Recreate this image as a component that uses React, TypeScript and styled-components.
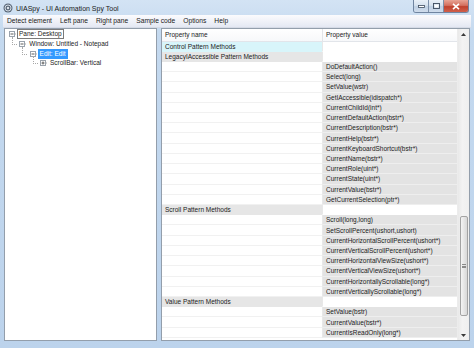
import React from 'react';
import styled, { createGlobalStyle } from 'styled-components';

const GlobalStyle = createGlobalStyle`
  html, body {
    margin: 0;
    padding: 0;
  }
  body {
    width: 474px;
    height: 348px;
    overflow: hidden;
    font-family: 'Liberation Sans', Arial, sans-serif;
    font-size: 6.5px;
    color: #1b1b1b;
  }
`;

type GridRow = { name?: string; value?: string; tone?: 'selected' | 'group' };

const ROWS: GridRow[] = [
  { name: 'Control Pattern Methods', tone: 'selected' },
  { name: 'LegacyIAccessible Pattern Methods', tone: 'group' },
  { value: 'DoDefaultAction()' },
  { value: 'Select(long)' },
  { value: 'SetValue(wstr)' },
  { value: 'GetIAccessible(idispatch*)' },
  { value: 'CurrentChildId(int*)' },
  { value: 'CurrentDefaultAction(bstr*)' },
  { value: 'CurrentDescription(bstr*)' },
  { value: 'CurrentHelp(bstr*)' },
  { value: 'CurrentKeyboardShortcut(bstr*)' },
  { value: 'CurrentName(bstr*)' },
  { value: 'CurrentRole(uint*)' },
  { value: 'CurrentState(uint*)' },
  { value: 'CurrentValue(bstr*)' },
  { value: 'GetCurrentSelection(ptr*)' },
  { name: 'Scroll Pattern Methods', tone: 'group' },
  { value: 'Scroll(long,long)' },
  { value: 'SetScrollPercent(ushort,ushort)' },
  { value: 'CurrentHorizontalScrollPercent(ushort*)' },
  { value: 'CurrentVerticalScrollPercent(ushort*)' },
  { value: 'CurrentHorizontalViewSize(ushort*)' },
  { value: 'CurrentVerticalViewSize(ushort*)' },
  { value: 'CurrentHorizontallyScrollable(long*)' },
  { value: 'CurrentVerticallyScrollable(long*)' },
  { name: 'Value Pattern Methods', tone: 'group' },
  { value: 'SetValue(bstr)' },
  { value: 'CurrentValue(bstr*)' },
  { value: 'CurrentIsReadOnly(long*)' },
];

type TreeNode = { label: string; level: number; open: boolean; state?: 'focus' | 'selected' };

const TREE: TreeNode[] = [
  { label: 'Pane: Desktop', level: 0, open: true, state: 'focus' },
  { label: 'Window: Untitled - Notepad', level: 1, open: true },
  { label: 'Edit: Edit', level: 2, open: true, state: 'selected' },
  { label: 'ScrollBar: Vertical', level: 3, open: false },
];

const MENU = ['Detect element', 'Left pane', 'Right pane', 'Sample code', 'Options', 'Help'];

const Expander = ({ open }: { open: boolean }) => (
  <ExpanderSvg width="11" height="10" viewBox="0 0 11 10">
    <rect x="3.5" y="2.5" width="5" height="5" fill="#fff" stroke="#9aa3ad" />
    <line x1="4.5" y1="5" x2="7.5" y2="5" stroke="#5a5a5a" />
    {!open && <line x1="6" y1="3.5" x2="6" y2="6.5" stroke="#5a5a5a" />}
    <line x1="9" y1="5" x2="11" y2="5" stroke="#a8a8a8" strokeDasharray="1 1" />
  </ExpanderSvg>
);

const App = () => (
  <>
    <GlobalStyle />
    <Window>
      <TitleBar>
        <AppIcon width="10" height="10" viewBox="0 0 10 10">
          <circle cx="5" cy="5" r="4.5" fill="#5d6b7c" />
          <circle cx="5" cy="5" r="3" fill="none" stroke="#dfe6ee" strokeWidth="0.9" />
          <circle cx="5" cy="5" r="1.2" fill="#dfe6ee" />
        </AppIcon>
        <Title>UIASpy - UI Automation Spy Tool</Title>
        <Caption>
          <CaptionButton kind="min">
            <svg width="7" height="4" viewBox="0 0 7 4">
              <rect x="0.5" y="1.5" width="6" height="2" fill="#fff" stroke="#3c4a5c" strokeWidth="0.8" />
            </svg>
          </CaptionButton>
          <CaptionButton kind="max">
            <svg width="7" height="6" viewBox="0 0 7 6">
              <rect x="0.5" y="0.5" width="6" height="5" fill="none" stroke="#3c4a5c" strokeWidth="0.9" />
              <rect x="1.5" y="1.8" width="4" height="2.7" fill="#fff" />
            </svg>
          </CaptionButton>
          <CaptionButton kind="close">
            <svg width="8" height="7" viewBox="0 0 8 7">
              <path d="M1 0.8 L7 6.2 M7 0.8 L1 6.2" stroke="#fff" strokeWidth="1.6" />
            </svg>
          </CaptionButton>
        </Caption>
      </TitleBar>

      <MenuBar>
        {MENU.map((m) => (
          <MenuItem key={m}>{m}</MenuItem>
        ))}
      </MenuBar>

      <Body>
        <LeftPane>
          {TREE.map((n) => (
            <TreeRow key={n.label} level={n.level}>
              <Expander open={n.open} />
              <NodeLabel state={n.state}>{n.label}</NodeLabel>
            </TreeRow>
          ))}
        </LeftPane>

        <RightPane>
          <Grid>
            <HeaderRow>
              <HeaderCell>Property name</HeaderCell>
              <HeaderCell divider>Property value</HeaderCell>
            </HeaderRow>
            {ROWS.map((r, i) => (
              <Row key={i}>
                <NameCell tone={r.tone}>{r.name}</NameCell>
                <ValueCell filled={!!r.value}>{r.value}</ValueCell>
              </Row>
            ))}
          </Grid>
          <ScrollBar>
            <ArrowButton>
              <svg width="5" height="3" viewBox="0 0 5 3">
                <path d="M0 3 L2.5 0 L5 3 Z" fill="#3a3a3a" />
              </svg>
            </ArrowButton>
            <Track>
              <Thumb>
                <Grip />
              </Thumb>
            </Track>
            <ArrowButton>
              <svg width="5" height="3" viewBox="0 0 5 3">
                <path d="M0 0 L2.5 3 L5 0 Z" fill="#3a3a3a" />
              </svg>
            </ArrowButton>
          </ScrollBar>
        </RightPane>
      </Body>
    </Window>
  </>
);

const Window = styled.div`
  width: 474px;
  height: 348px;
  display: flex;
  flex-direction: column;
  background: linear-gradient(180deg, #d3e3f4 0%, #c4d9ef 10%, #bcd3ec 100%);
  box-sizing: border-box;
`;

const TitleBar = styled.div`
  height: 15px;
  display: flex;
  align-items: center;
  padding-left: 3px;
  position: relative;
`;

const AppIcon = styled.svg`
  flex: none;
  margin-top: 1px;
`;

const Title = styled.span`
  margin-left: 3px;
  margin-top: 1px;
  font-size: 7px;
  color: #1a1a1a;
`;

const Caption = styled.div`
  position: absolute;
  top: 0;
  right: 5px;
  display: flex;
  height: 12px;
  border: 1px solid #6f84a0;
  border-top: none;
  border-radius: 0 0 3px 3px;
  overflow: hidden;
`;

const CaptionButton = styled.div<{ kind: 'min' | 'max' | 'close' }>`
  width: ${({ kind }) => (kind === 'close' ? 24 : 14)}px;
  display: flex;
  align-items: center;
  justify-content: center;
  border-left: ${({ kind }) => (kind === 'min' ? 'none' : '1px solid #7b8fa9')};
  background: ${({ kind }) =>
    kind === 'close'
      ? 'linear-gradient(180deg, #e8a394 0%, #d4705f 45%, #c0412d 55%, #d0604c 100%)'
      : 'linear-gradient(180deg, #e9f0f8 0%, #d5e1ee 45%, #bfd0e4 55%, #cfdcec 100%)'};
`;

const MenuBar = styled.div`
  height: 13px;
  margin: 0 3px;
  display: flex;
  align-items: center;
  background: linear-gradient(180deg, #fbfbfd 0%, #eef0f7 60%, #e4e8f3 100%);
  border-bottom: 1px solid #d6dbe6;
  box-sizing: border-box;
`;

const MenuItem = styled.span`
  padding: 0 4px;
  font-size: 6.7px;
  line-height: 12px;
  color: #1a1a1a;
  white-space: nowrap;
`;

const Body = styled.div`
  flex: 1;
  display: flex;
  gap: 4px;
  padding: 0 4px 7px 4px;
  min-height: 0;
`;

const LeftPane = styled.div`
  width: 153px;
  flex: none;
  background: #fff;
  border: 1px solid #939eab;
  box-sizing: border-box;
`;

const TreeRow = styled.div<{ level: number }>`
  position: relative;
  height: 9.8px;
  display: flex;
  align-items: center;
  padding-left: ${({ level }) => 1 + level * 10.3}px;

  &::before {
    content: '';
    display: ${({ level }) => (level > 0 ? 'block' : 'none')};
    position: absolute;
    left: ${({ level }) => 1 + (level - 1) * 10.3 + 6}px;
    top: -2px;
    width: 4px;
    height: 7px;
    border-left: 1px dotted #a8a8a8;
    border-bottom: 1px dotted #a8a8a8;
  }
`;

const ExpanderSvg = styled.svg`
  flex: none;
`;

const NodeLabel = styled.span<{ state?: 'focus' | 'selected' }>`
  padding: 0 1px;
  line-height: 8px;
  white-space: nowrap;
  border: 1px solid ${({ state }) => (state === 'focus' ? '#7a7a7a' : 'transparent')};
  background: ${({ state }) => (state === 'selected' ? '#3399ff' : 'transparent')};
  color: ${({ state }) => (state === 'selected' ? '#fff' : '#1b1b1b')};
`;

const RightPane = styled.div`
  flex: 1;
  display: flex;
  background: #fff;
  border: 1px solid #939eab;
  box-sizing: border-box;
  min-width: 0;
`;

const Grid = styled.div`
  flex: 1;
  overflow: hidden;
`;

const HeaderRow = styled.div`
  display: grid;
  grid-template-columns: 160px 1fr;
  height: 12.5px;
  background: linear-gradient(180deg, #ffffff 0%, #f7f8fa 100%);
  border-bottom: 1px solid #e2e5ea;
  box-sizing: border-box;
`;

const HeaderCell = styled.div<{ divider?: boolean }>`
  padding-left: 3px;
  line-height: 11px;
  color: #222;
  border-left: ${({ divider }) => (divider ? '1px solid #e3e5e8' : 'none')};
`;

const Row = styled.div`
  display: grid;
  grid-template-columns: 160px 1fr;
  grid-template-rows: 100%;
  height: 10.22px;
  overflow: hidden;
`;

const NameCell = styled.div<{ tone?: 'selected' | 'group' }>`
  padding-left: 3px;
  display: flex;
  align-items: center;
  white-space: nowrap;
  box-sizing: border-box;
  border-bottom: 1px solid ${({ tone }) => (tone ? 'transparent' : '#f1f1f1')};
  background: ${({ tone }) => (tone === 'selected' ? '#d8f5fa' : tone === 'group' ? '#e6e6e6' : '#fff')};
`;

const ValueCell = styled.div<{ filled: boolean }>`
  padding-left: 3px;
  display: flex;
  align-items: center;
  white-space: nowrap;
  box-sizing: border-box;
  border-left: 1px solid #e8e8e8;
  border-bottom: 1px solid ${({ filled }) => (filled ? '#eeeeee' : '#fff')};
  background: ${({ filled }) => (filled ? '#e3e3e3' : '#fff')};
`;

const ScrollBar = styled.div`
  width: 11px;
  flex: none;
  display: flex;
  flex-direction: column;
  background: linear-gradient(90deg, #e9e9e9 0%, #f3f3f3 40%, #efefef 100%);
  border-left: 1px solid #ececec;
`;

const ArrowButton = styled.div`
  height: 10px;
  flex: none;
  display: flex;
  align-items: center;
  justify-content: center;
`;

const Track = styled.div`
  flex: 1;
  display: flex;
  flex-direction: column;
  align-items: center;
`;

const Thumb = styled.div`
  margin-top: 177px;
  width: 8px;
  height: 100px;
  box-sizing: border-box;
  border: 1px solid #a3a3a3;
  border-radius: 2px;
  background: linear-gradient(90deg, #f4f4f4 0%, #e6e6e6 50%, #d8d8d8 100%);
  display: flex;
  align-items: center;
  justify-content: center;
`;

const Grip = styled.div`
  width: 4px;
  height: 4px;
  border-top: 1px solid #8a8a8a;
  border-bottom: 1px solid #8a8a8a;
  box-sizing: border-box;
  position: relative;

  &::after {
    content: '';
    position: absolute;
    left: 0;
    right: 0;
    top: 0.5px;
    border-top: 1px solid #8a8a8a;
  }
`;

export default App;
